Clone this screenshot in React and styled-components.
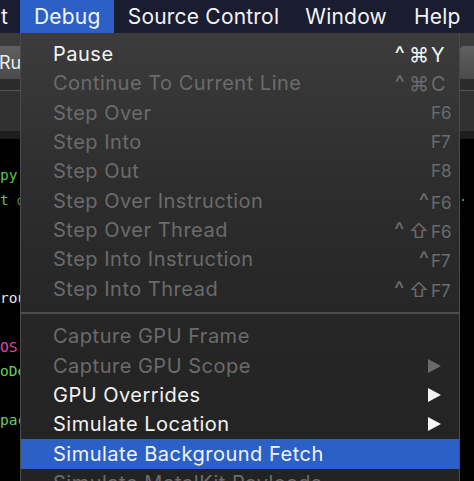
import React from "react";
import styled, { createGlobalStyle } from "styled-components";

const GlobalStyle = createGlobalStyle`
  html, body {
    margin: 0;
    padding: 0;
    background: #000;
    overflow: hidden;
  }
`;

const UI_FONT = `Inter, "Liberation Sans", "DejaVu Sans", sans-serif`;

const menuBarTitles = [
  { label: "Edit", clipped: true },
  { label: "Debug", active: true },
  { label: "Source Control" },
  { label: "Window" },
  { label: "Help" },
];

const debugItems = [
  { label: "Pause", mods: ["^", "⌘"], key: "Y" },
  { label: "Continue To Current Line", disabled: true, mods: ["^", "⌘"], key: "C" },
  { label: "Step Over", disabled: true, key: "F6", fkey: true },
  { label: "Step Into", disabled: true, key: "F7", fkey: true },
  { label: "Step Out", disabled: true, key: "F8", fkey: true },
  { label: "Step Over Instruction", disabled: true, mods: ["^"], key: "F6", fkey: true },
  { label: "Step Over Thread", disabled: true, mods: ["^", "⇧"], key: "F6", fkey: true },
  { label: "Step Into Instruction", disabled: true, mods: ["^"], key: "F7", fkey: true },
  { label: "Step Into Thread", disabled: true, mods: ["^", "⇧"], key: "F7", fkey: true },
];

const gpuItems = [
  { label: "Capture GPU Frame", disabled: true },
  { label: "Capture GPU Scope", disabled: true, submenu: true },
  { label: "GPU Overrides", submenu: true },
  { label: "Simulate Location", submenu: true },
  { label: "Simulate Background Fetch", highlighted: true },
  { label: "Simulate MetalKit Payloads", disabled: true },
];

const codeLines = [
  { text: "py", color: "#5ec452" },
  { text: "t ◎", color: "#5ec452", marker: true },
  { text: "" },
  { text: "" },
  { text: "" },
  { text: "rou", color: "#e6e6e6" },
  { text: "" },
  { text: "OS", color: "#e0449c" },
  { text: "oDe", color: "#68cf5c" },
  { text: "" },
  { text: "pac", color: "#68cf5c" },
  { text: "" },
];

function SubmenuArrow({ disabled }) {
  return (
    <ArrowIcon width="13" height="14" viewBox="0 0 13 14" aria-hidden="true">
      <polygon points="0,0 13,7 0,14" fill={disabled ? "#6a6a6a" : "#f4f4f4"} />
    </ArrowIcon>
  );
}

function MenuRow({ item }) {
  return (
    <Row $disabled={item.disabled} $highlighted={item.highlighted}>
      <RowLabel>{item.label}</RowLabel>
      {item.key && (
        <Shortcut>
          <Mods>
            {(item.mods || []).map((m) => (
              <Mod key={m} $caret={m === "^"}>{m}</Mod>
            ))}
          </Mods>
          <KeyCap $fkey={item.fkey}>{item.key}</KeyCap>
        </Shortcut>
      )}
      {item.submenu && <SubmenuArrow disabled={item.disabled} />}
    </Row>
  );
}

export default function App() {
  return (
    <>
      <GlobalStyle />
      <Screen>
        <MenuBar>
          {menuBarTitles.map((t) => (
            <MenuTitle key={t.label} $active={t.active} $clipped={t.clipped}>
              <span>{t.label}</span>
            </MenuTitle>
          ))}
        </MenuBar>

        <Workspace>
          <Toolbar>
            <ToolButton $edge="left">Run</ToolButton>
            <ToolButton $edge="right" />
          </Toolbar>
          <SubBar />
          <TabBar />
          <TabShadow />
          <Editor>
            {codeLines.map((line, i) => (
              <CodeLine key={i} $color={line.color}>
                <span>{line.text}</span>
                {line.marker && <GutterDot />}
              </CodeLine>
            ))}
          </Editor>
        </Workspace>

        <DropMenu>
          {debugItems.map((item) => (
            <MenuRow key={item.label} item={item} />
          ))}
          <Separator />
          {gpuItems.map((item) => (
            <MenuRow key={item.label} item={item} />
          ))}
        </DropMenu>
      </Screen>
    </>
  );
}

const Screen = styled.div`
  position: relative;
  width: 474px;
  height: 481px;
  overflow: hidden;
  display: flex;
  flex-direction: column;
  background: #000;
  font-family: ${UI_FONT};
`;

const MenuBar = styled.div`
  height: 33px;
  flex-shrink: 0;
  display: flex;
  align-items: stretch;
  background: #1a1c30;
  color: #f4f4f6;
  font-size: 21px;
  letter-spacing: 0.2px;
`;

const MenuTitle = styled.div`
  display: flex;
  align-items: center;
  justify-content: ${(p) => (p.$clipped ? "flex-end" : "flex-start")};
  padding: 0 14px;
  white-space: nowrap;
  overflow: hidden;
  background: ${(p) => (p.$active ? "#2b61c6" : "transparent")};
  ${(p) => p.$clipped && "width: 20px; padding: 0 12px 0 0; box-sizing: border-box; flex-shrink: 0;"}
`;

const Workspace = styled.div`
  flex: 1;
  display: flex;
  flex-direction: column;
`;

const Toolbar = styled.div`
  height: 46px;
  box-sizing: border-box;
  padding-top: 13px;
  display: flex;
  justify-content: space-between;
  background: #3b3b3b;
`;

const ToolButton = styled.div`
  height: 33px;
  min-width: 20px;
  box-sizing: border-box;
  padding: 0 10px;
  display: flex;
  align-items: center;
  border-radius: 4px;
  background: linear-gradient(#5f5f5f, #4b4b4b);
  color: #ececec;
  font-size: 18px;
  margin-left: ${(p) => (p.$edge === "left" ? "-11px" : "0")};
  margin-right: ${(p) => (p.$edge === "right" ? "-26px" : "0")};
  width: ${(p) => (p.$edge === "right" ? "40px" : "auto")};
`;

const SubBar = styled.div`
  height: 11px;
  background: #2b2b2b;
  border-bottom: 1px solid #545454;
`;

const TabBar = styled.div`
  height: 40px;
  background: #313131;
`;

const TabShadow = styled.div`
  height: 8px;
  background: #1d1d1d;
`;

const Editor = styled.div`
  flex: 1;
  padding-top: 23.75px;
  background: #000;
  font-family: "DejaVu Sans Mono", "Liberation Mono", monospace;
  font-size: 14.5px;
`;

const CodeLine = styled.div`
  height: 24.5px;
  display: flex;
  align-items: center;
  justify-content: space-between;
  white-space: pre;
  color: ${(p) => p.$color || "#ddd"};
`;

const GutterDot = styled.span`
  width: 2px;
  height: 2px;
  margin-right: 10px;
  border-radius: 50%;
  background: #5ec452;
`;

const DropMenu = styled.div`
  position: absolute;
  top: 33px;
  left: 20px;
  width: 440px;
  bottom: -40px;
  box-sizing: border-box;
  padding-top: 6.3px;
  border-left: 1px solid #4a4a4a;
  border-right: 1px solid #4a4a4a;
  background: linear-gradient(180deg, #3c3c3d 0px, #2e2e2f 140px, #262627 280px, #222223 100%);
  font-family: ${UI_FONT};
`;

const Row = styled.div`
  height: 29.35px;
  display: flex;
  align-items: center;
  padding: 0 10px 0 32px;
  font-size: 20px;
  letter-spacing: 0.5px;
  white-space: nowrap;
  color: ${(p) => (p.$disabled ? "#6b6b6b" : "#f3f3f3")};
  background: ${(p) => (p.$highlighted ? "#2b61c6" : "transparent")};
`;

const RowLabel = styled.span`
  flex: 1;
`;

const Shortcut = styled.span`
  display: flex;
  align-items: baseline;
`;

const Mods = styled.span`
  display: flex;
  align-items: baseline;
  gap: 4px;
  margin-right: 2px;
`;

const Mod = styled.span`
  font-size: ${(p) => (p.$caret ? "22px" : "20px")};
  letter-spacing: 0;
`;

const KeyCap = styled.span`
  width: 18px;
  font-size: ${(p) => (p.$fkey ? "17px" : "20px")};
  letter-spacing: 0;
`;

const ArrowIcon = styled.svg`
  margin-right: 8px;
  flex-shrink: 0;
`;

const Separator = styled.div`
  height: 18.4px;
  display: flex;
  align-items: center;
  &::after {
    content: "";
    flex: 1;
    height: 2px;
    background: #4d4d4d;
  }
`;
